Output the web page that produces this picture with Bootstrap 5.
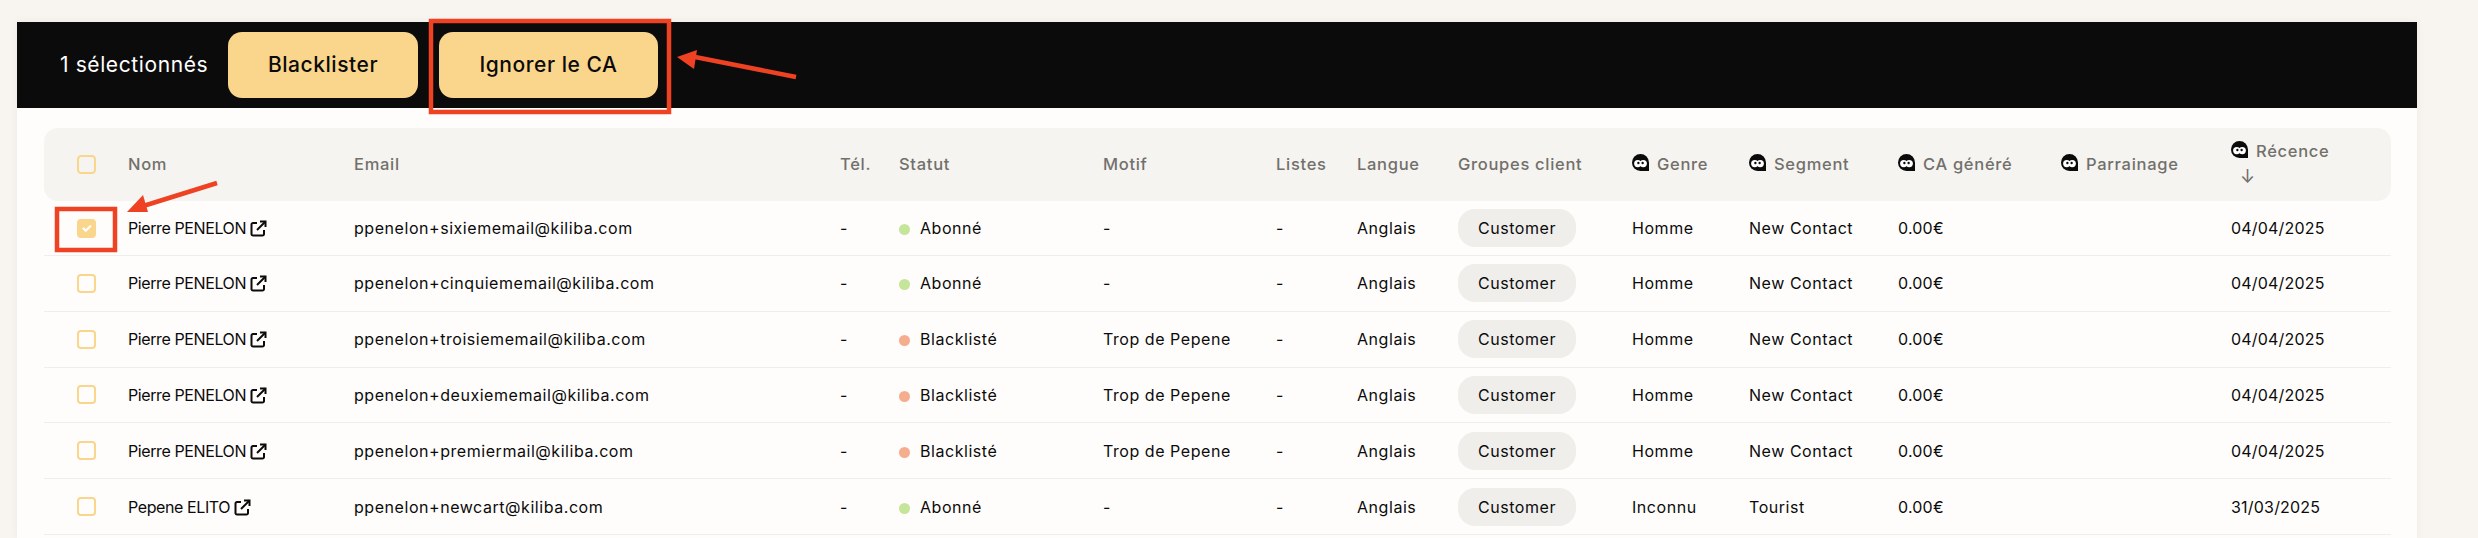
<!DOCTYPE html>
<html lang="fr">
<head>
  <meta charset="utf-8">
  <title>Contacts</title>
  <link href="https://cdn.jsdelivr.net/npm/bootstrap@5.3.2/dist/css/bootstrap.min.css" rel="stylesheet">
  <script src="https://cdn.jsdelivr.net/npm/bootstrap@5.3.2/dist/js/bootstrap.bundle.min.js"></script>
  <style>
    html, body { height: 100%; overflow: hidden; }
    body { background: #f8f5f1; font-family: "Inter", "Liberation Sans", sans-serif; color: #0b0b0b; }
    .page-wrap { position: relative; height: 538px; padding: 22px 61px 0 17px; }
    .main-panel { height: 516px; background: #fffdfb; box-shadow: 0 0 8px rgba(120, 110, 100, .08); }
    .select-bar { height: 86px; background: #0b0b0b; padding-left: 43px; }
    .select-count { width: 168px; color: #fff; font-size: 21px; letter-spacing: .6px; white-space: nowrap; }
    .bar-btn { height: 66px; padding: 0; background: #fad58c; border: 0; border-radius: 14px; color: #0b0b0b; font-size: 21px; font-weight: 500; letter-spacing: .55px; }
    .bar-btn:hover { background: #fad58c; color: #0b0b0b; }
    .btn-blacklist { width: 190px; margin-right: 21px; }
    .btn-ignore { width: 219px; }
    .table-zone { padding: 20px 26px 0 27px; }
    .contacts { width: 2347px; table-layout: fixed; margin: 0; font-size: 16px; letter-spacing: .55px; --bs-table-bg: transparent; }
    .contacts th, .contacts td { padding: 0; vertical-align: middle; }
    .contacts th { height: 73px; background: #f5f4f1; border: 0; color: #72706b; font-weight: 500; font-size: 16.5px; letter-spacing: .7px; }
    .contacts th:first-child { border-radius: 14px 0 0 14px; }
    .contacts th:last-child { border-radius: 0 14px 14px 0; }
    .contacts td { height: 55.8px; border-bottom: 1px solid #efeeec; color: #0b0b0b; }
    .contacts tbody tr:first-child td { height: 54.5px; }
    .contacts .name-cell { letter-spacing: -.4px; }
    .contacts .num-cell { letter-spacing: .2px; }
    .check-cell { padding-left: 33px !important; line-height: 0; }
    .box-check { width: 19px; height: 19px; margin: 0; background-color: transparent; border: 2px solid #fad58c; border-radius: 4px; }
    .box-check:checked { background-color: #fad58c; border-color: #fad58c; }
    .status-dot { display: inline-block; width: 11px; height: 11px; border-radius: 50%; margin-right: 10px; vertical-align: -1px; }
    .dot-ok { background: #c5e59a; }
    .dot-black { background: #f5ad8e; }
    .group-pill { display: inline-block; width: 118px; height: 38px; line-height: 38px; text-align: center; background: #f0eeeb; border-radius: 17px; }
    .peng { width: 17px; height: 17px; margin-right: 8px; vertical-align: -1px; }
    .ext-link { width: 17px; height: 17px; margin-left: 4px; vertical-align: -3px; }
    .sort-arrow { display: block; font-weight: 400; font-size: 18px; line-height: 26px; padding-left: 9px; }
    .notes { position: absolute; left: 0; top: 0; pointer-events: none; }
  </style>
</head>
<body>
  <svg width="0" height="0" class="d-block">
    <symbol id="penguin" viewBox="0 0 16 16">
      <path d="M8 0a8 8 0 0 1 8 8v8H8A8 8 0 0 1 8 0z" fill="#0b0b0b"/>
      <circle cx="5.400" cy="9" r="3.400" fill="#fff"/>
      <circle cx="10.600" cy="9" r="3.400" fill="#fff"/>
      <circle cx="6" cy="8.500" r="1.100" fill="#0b0b0b"/>
      <circle cx="10" cy="8.500" r="1.100" fill="#0b0b0b"/>
    </symbol>
    <symbol id="external" viewBox="0 0 17 17">
      <g fill="none" stroke="#0b0b0b" stroke-width="2">
        <path d="M7 3H3a1.500 1.500 0 0 0-1.500 1.500v9.500A1.500 1.500 0 0 0 3 15.500h9.500A1.500 1.500 0 0 0 14 14v-4"/>
        <path d="M10 1.500h5.500V7"/>
        <path d="M15.500 1.500 7 10"/>
      </g>
    </symbol>
  </svg>

  <div class="page-wrap">
    <div class="main-panel">
      <div class="select-bar d-flex align-items-center">
        <span class="select-count">1 sélectionnés</span>
        <button type="button" class="btn bar-btn btn-blacklist">Blacklister</button>
        <button type="button" class="btn bar-btn btn-ignore">Ignorer le CA</button>
      </div>
      <div class="table-zone">
        <table class="table contacts">
          <colgroup>
            <col style="width:84px"><col style="width:226px"><col style="width:486px"><col style="width:59px">
            <col style="width:204px"><col style="width:173px"><col style="width:81px"><col style="width:101px">
            <col style="width:174px"><col style="width:117px"><col style="width:149px"><col style="width:163px">
            <col style="width:170px"><col style="width:160px">
          </colgroup>
          <thead>
            <tr>
              <th class="check-cell"><input class="form-check-input box-check" type="checkbox"></th>
              <th>Nom</th>
              <th>Email</th>
              <th>Tél.</th>
              <th>Statut</th>
              <th>Motif</th>
              <th>Listes</th>
              <th>Langue</th>
              <th>Groupes client</th>
              <th><svg class="peng"><use href="#penguin"/></svg>Genre</th>
              <th><svg class="peng"><use href="#penguin"/></svg>Segment</th>
              <th><svg class="peng"><use href="#penguin"/></svg>CA généré</th>
              <th><svg class="peng"><use href="#penguin"/></svg>Parrainage</th>
              <th><svg class="peng"><use href="#penguin"/></svg>Récence<span class="sort-arrow">↓</span></th>
            </tr>
          </thead>
          <tbody id="contactRows"></tbody>
        </table>
      </div>
    </div>

    <!-- annotations drawn over the screenshot -->
    <svg class="notes" width="2478" height="538" viewBox="0 0 2478 538">
      <g fill="none" stroke="#ee4223" stroke-width="4.500">
        <rect x="431" y="21" width="238" height="91"/>
        <rect x="57" y="209" width="58" height="41"/>
        <path d="M796 77 690 56"/>
        <path d="M217 183 140 207"/>
      </g>
      <path d="M677 57 697 50 694 69z" fill="#ee4223"/>
      <path d="M127 212 143 195 148 212z" fill="#ee4223"/>
    </svg>
  </div>

  <script>
    const contacts = [
      { name: "Pierre PENELON", email: "ppenelon+sixiememail@kiliba.com", status: "Abonné", motif: "-", genre: "Homme", segment: "New Contact", date: "04/04/2025", checked: true },
      { name: "Pierre PENELON", email: "ppenelon+cinquiememail@kiliba.com", status: "Abonné", motif: "-", genre: "Homme", segment: "New Contact", date: "04/04/2025" },
      { name: "Pierre PENELON", email: "ppenelon+troisiememail@kiliba.com", status: "Blacklisté", motif: "Trop de Pepene", genre: "Homme", segment: "New Contact", date: "04/04/2025" },
      { name: "Pierre PENELON", email: "ppenelon+deuxiememail@kiliba.com", status: "Blacklisté", motif: "Trop de Pepene", genre: "Homme", segment: "New Contact", date: "04/04/2025" },
      { name: "Pierre PENELON", email: "ppenelon+premiermail@kiliba.com", status: "Blacklisté", motif: "Trop de Pepene", genre: "Homme", segment: "New Contact", date: "04/04/2025" },
      { name: "Pepene ELITO", email: "ppenelon+newcart@kiliba.com", status: "Abonné", motif: "-", genre: "Inconnu", segment: "Tourist", date: "31/03/2025" }
    ];

    const rows = document.querySelector("#contactRows");
    contacts.forEach(function (c) {
      const dot = c.status === "Abonné" ? "dot-ok" : "dot-black";
      rows.insertAdjacentHTML("beforeend", `<tr>
        <td class="check-cell"><input class="form-check-input box-check" type="checkbox" ${c.checked ? "checked" : ""}></td>
        <td class="name-cell">${c.name}<svg class="ext-link"><use href="#external"/></svg></td>
        <td>${c.email}</td>
        <td>-</td>
        <td><span class="status-dot ${dot}"></span>${c.status}</td>
        <td>${c.motif}</td>
        <td>-</td>
        <td>Anglais</td>
        <td><span class="group-pill">Customer</span></td>
        <td>${c.genre}</td>
        <td>${c.segment}</td>
        <td class="num-cell">0.00€</td>
        <td></td>
        <td class="num-cell">${c.date}</td>
      </tr>`);
    });
  </script>
</body>
</html>
